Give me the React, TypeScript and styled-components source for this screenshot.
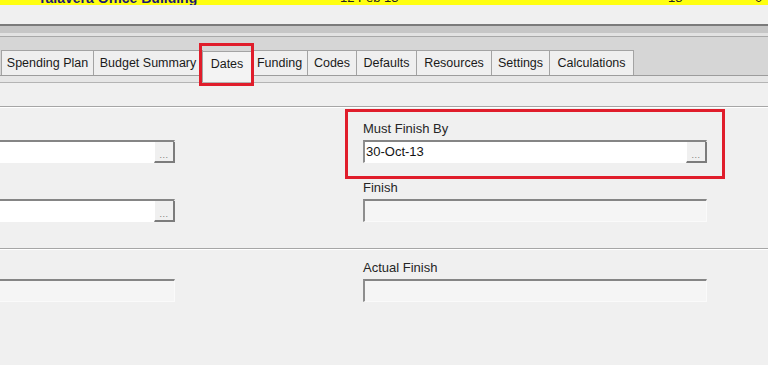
import React from 'react';
import styled, { createGlobalStyle } from 'styled-components';

const Global = createGlobalStyle`
  html, body { margin: 0; padding: 0; background: #f0f0f0; overflow: hidden; }
  body { font-family: "Liberation Sans", Arial, sans-serif; }
  * { box-sizing: border-box; }
`;

const Page = styled.div`
  width: 768px;
  height: 365px;
  overflow: hidden;
  background: #f0f0f0;
  display: flex;
  flex-direction: column;
`;

const GridStrip = styled.div`
  flex: none;
  height: 5px;
  background: #ffff10;
  overflow: hidden;
`;

const GridRow = styled.div`
  display: flex;
  height: 16px;
  margin-top: -10px;
  line-height: 16px;
  white-space: nowrap;
`;

const GridCell = styled.div<{ $w: number; $pl?: number; $bold?: boolean }>`
  flex: none;
  width: ${(p) => p.$w}px;
  padding-left: ${(p) => p.$pl ?? 0}px;
  font-size: ${(p) => (p.$bold ? 14 : 13)}px;
  font-weight: ${(p) => (p.$bold ? 700 : 400)};
  color: ${(p) => (p.$bold ? '#1c1c72' : '#222')};
`;

const TopGap = styled.div`
  flex: none;
  height: 19px;
  background: #f0f0f0;
`;

const Frame = styled.div`
  flex: none;
  border-top: 2px solid #7a7a7a;
  background: #c6c6c6;
  padding-top: 7px;
`;

const FrameInner = styled.div`
  border-top: 3px solid #e2e2e2;
  border-bottom: 1px solid #a8a8a8;
  background: #e2e2e2;
`;

const TabStrip = styled.div`
  flex: none;
  height: 39px;
  display: flex;
  align-items: flex-end;
  padding-left: 1px;
  background: #d6d6d6;
  border-bottom: 1px solid #9c9c9c;
`;

const Tab = styled.div<{ $w: number; $active?: boolean }>`
  position: relative;
  flex: none;
  width: ${(p) => p.$w}px;
  height: ${(p) => (p.$active ? 31 : 25)}px;
  margin-right: -1px;
  margin-bottom: ${(p) => (p.$active ? -7 : 0)}px;
  padding-bottom: ${(p) => (p.$active ? 6 : 0)}px;
  z-index: ${(p) => (p.$active ? 2 : 1)};
  border: 1px solid #a3a3a3;
  border-bottom: none;
  background: ${(p) => (p.$active ? '#f3f3f3' : '#efefef')};
  display: flex;
  align-items: center;
  justify-content: center;
  font-size: 12.5px;
  color: #1a1a1a;
  white-space: nowrap;
`;

const Highlight = styled.div<{ $t: number; $l: number; $r: number; $b: number }>`
  position: absolute;
  top: ${(p) => p.$t}px;
  left: ${(p) => p.$l}px;
  right: ${(p) => p.$r}px;
  bottom: ${(p) => p.$b}px;
  border: 3px solid #e01d2b;
  pointer-events: none;
  z-index: 5;
`;

const PanelTop = styled.div`
  flex: none;
  height: 7px;
  background: #e6e6e6;
  border-bottom: 1px solid #b4b4b4;
`;

const Content = styled.div`
  flex: 1;
  padding-top: 23px;
`;

const Section = styled.section<{ $pt: number; $pb: number }>`
  border-top: 1px solid #a6a6a6;
  box-shadow: inset 0 1px 0 #ffffff;
  padding-top: ${(p) => p.$pt}px;
  padding-bottom: ${(p) => p.$pb}px;
  margin-left: -169px;
  display: grid;
  grid-template-columns: 344px 344px;
  column-gap: 188px;
  row-gap: 17px;
`;

const Field = styled.div`
  position: relative;
  display: flex;
  flex-direction: column;
  gap: 4px;
`;

const Label = styled.div`
  height: 15px;
  line-height: 15px;
  font-size: 13px;
  color: #262626;
  white-space: nowrap;
`;

const InputBox = styled.div<{ $ro?: boolean }>`
  display: flex;
  height: 23px;
  border-top: 2px solid #858585;
  border-left: 2px solid #8e8e8e;
  border-right: 1px solid ${(p) => (p.$ro ? '#fafafa' : '#ffffff')};
  border-bottom: 1px solid ${(p) => (p.$ro ? '#fafafa' : '#ffffff')};
  background: ${(p) => (p.$ro ? '#f5f5f5' : '#ffffff')};
`;

const Value = styled.div`
  flex: 1;
  padding-left: 1px;
  font-size: 13px;
  line-height: 19px;
  color: #141414;
`;

const EllipsisBtn = styled.div`
  flex: none;
  width: 21px;
  margin-right: -1px;
  margin-bottom: -1px;
  background: #f0f0f0;
  border-left: 1px solid #ffffff;
  border-right: 2px solid #7c7c7c;
  border-bottom: 2px solid #7c7c7c;
  display: flex;
  align-items: flex-end;
  justify-content: center;
  font-size: 9px;
  line-height: 9px;
  color: #7a7a7a;
  letter-spacing: 0.5px;
  padding-bottom: 1px;
`;

type FieldSpec = { label: string; value?: string; ro?: boolean; btn?: boolean; mark?: boolean };

const tabs: { name: string; w: number; active?: boolean }[] = [
  { name: 'Spending Plan', w: 93 },
  { name: 'Budget Summary', w: 110 },
  { name: 'Dates', w: 50, active: true },
  { name: 'Funding', w: 57 },
  { name: 'Codes', w: 50 },
  { name: 'Defaults', w: 61 },
  { name: 'Resources', w: 76 },
  { name: 'Settings', w: 59 },
  { name: 'Calculations', w: 85 },
];

const section1: FieldSpec[] = [
  { label: '\u00a0', btn: true },
  { label: 'Must Finish By', value: '30-Oct-13', btn: true, mark: true },
  { label: '\u00a0', btn: true },
  { label: 'Finish', ro: true },
];

const section2: FieldSpec[] = [
  { label: '\u00a0', ro: true },
  { label: 'Actual Finish', ro: true },
];

const renderField = (f: FieldSpec, i: number) => (
  <Field key={i}>
    <Label>{f.label}</Label>
    <InputBox $ro={f.ro}>
      <Value>{f.value ?? ''}</Value>
      {f.btn && <EllipsisBtn>...</EllipsisBtn>}
    </InputBox>
    {f.mark && <Highlight $t={-12} $l={-18} $r={-18} $b={-16} />}
  </Field>
);

export default function App() {
  return (
    <Page>
      <Global />
      <GridStrip>
        <GridRow>
          <GridCell $w={340} $pl={38} $bold>Talavera Office Building</GridCell>
          <GridCell $w={328}>12 Feb 13</GridCell>
          <GridCell $w={87}>18</GridCell>
          <GridCell $w={13}>0</GridCell>
        </GridRow>
      </GridStrip>
      <TopGap />
      <Frame>
        <FrameInner />
      </Frame>
      <TabStrip>
        {tabs.map((t) => (
          <Tab key={t.name} $w={t.w} $active={t.active}>
            {t.name}
            {t.active && <Highlight $t={-9} $l={-4} $r={-3} $b={-4} />}
          </Tab>
        ))}
      </TabStrip>
      <PanelTop />
      <Content>
        <Section $pt={14} $pb={26}>{section1.map(renderField)}</Section>
        <Section $pt={11} $pb={0}>{section2.map(renderField)}</Section>
      </Content>
    </Page>
  );
}
